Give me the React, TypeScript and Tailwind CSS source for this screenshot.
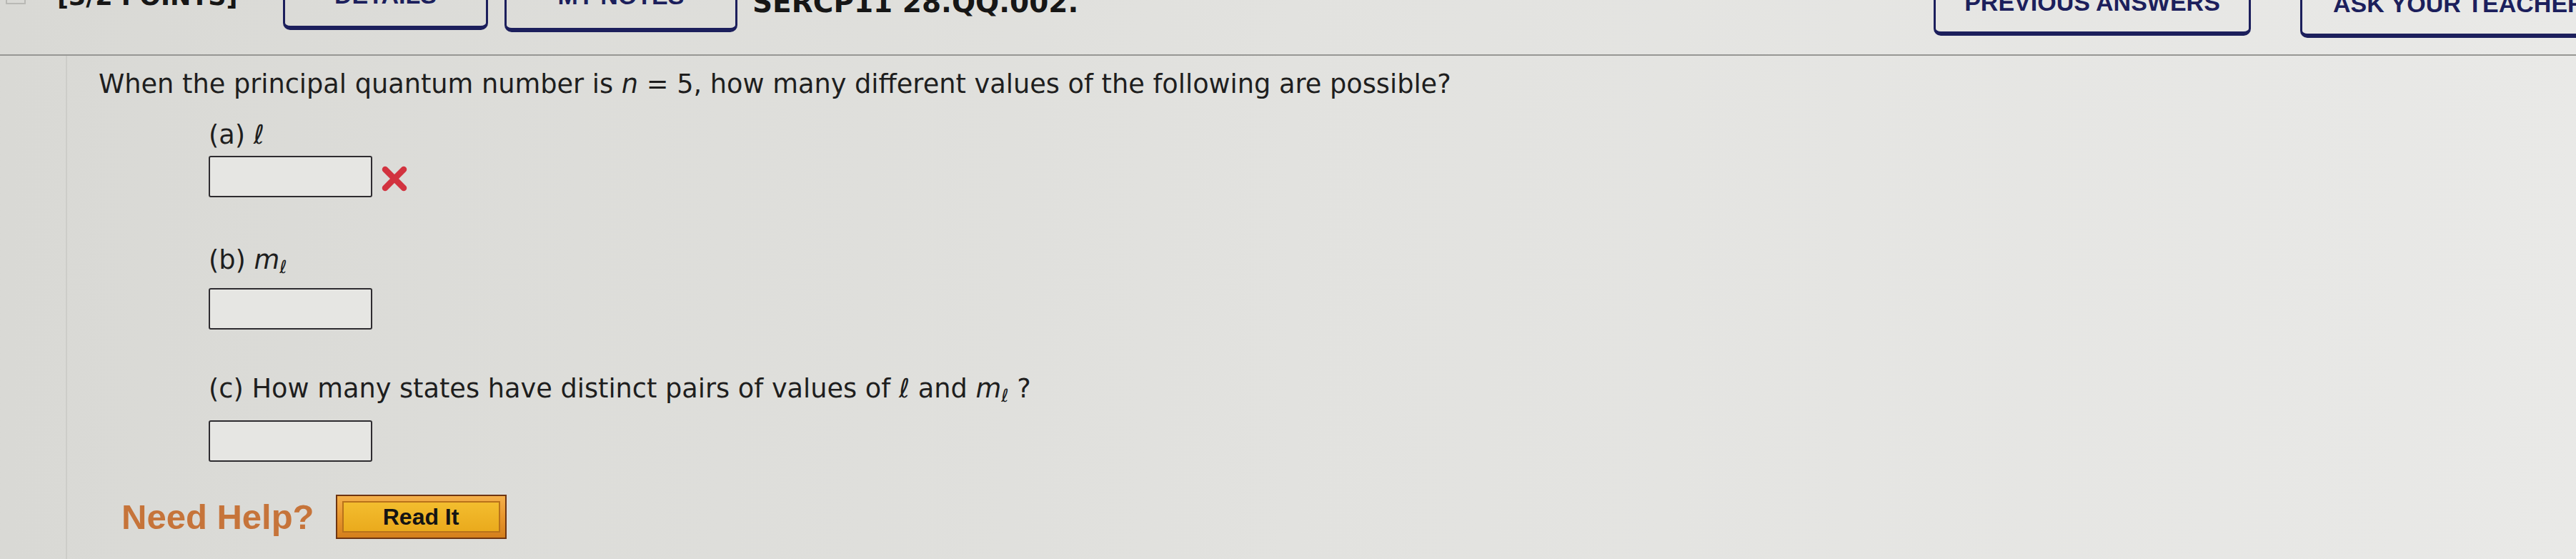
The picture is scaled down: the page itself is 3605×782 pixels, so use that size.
import React from "react";

const sans = { fontFamily: '"DejaVu Sans", Verdana, sans-serif' };

function TopButton({ label, width, height, ml, textTop, align = "center", pl = 0 }: { label: string; width: number; height: number; ml: number; textTop: number; align?: "center" | "left"; pl?: number }) {
  return (
    <div
      className={`flex shrink-0 overflow-hidden rounded-b-[10px] border-x-[3px] border-b-[6px] border-[#1c1f5c] ${align === "center" ? "justify-center" : "justify-start"}`}
      style={{ width, height, marginLeft: ml, paddingLeft: pl }}
    >
      <span
        className="whitespace-nowrap text-[34px] font-bold leading-none text-[#1c1f5c]"
        style={{ fontFamily: '"Liberation Sans", Arial, sans-serif', marginTop: textTop }}
      >
        {label}
      </span>
    </div>
  );
}

function AnswerBox() {
  return <div className="h-[58px] w-[229px] rounded-[3px] border-[2.5px] border-[#2e2c30] bg-[#e6e6e3]" />;
}

function RedX() {
  return (
    <svg width="38" height="40" viewBox="0 0 38 40" className="ml-[12px] mt-[12px]">
      <line x1="6" y1="7" x2="32" y2="33" stroke="#d2333f" strokeWidth="8.5" strokeLinecap="round" />
      <line x1="32" y1="7" x2="6" y2="33" stroke="#d2333f" strokeWidth="8.5" strokeLinecap="round" />
    </svg>
  );
}

const Ell = () => <span>ℓ</span>;
const ML = () => (
  <span>
    <span className="italic">m</span>
    <span className="align-[-0.22em] text-[25px]">ℓ</span>
  </span>
);

export default function App() {
  return (
    <div
      className="relative h-[782px] w-[3605px] overflow-hidden bg-gradient-to-r from-[#d9d9d5] via-[#e2e2df] to-[#e9e9e7] text-[#1e1e1e]"
      style={sans}
    >
      {/* top strip */}
      <div className="flex h-[78px] items-start border-b-2 border-[#979794]">
        <div className="ml-[8px] mt-[-20px] h-[26px] w-[28px] shrink-0 border-2 border-[#b9b9b5]" />
        <span className="ml-[44px] mt-[-22px] w-[253px] shrink-0 whitespace-nowrap text-[35px] font-bold leading-none text-[#161616]">
          [3/2 POINTS]
        </span>
        <TopButton label="DETAILS" width={287} height={42} ml={63} textTop={-24} />
        <TopButton label="MY NOTES" width={326} height={45} ml={23} textTop={-23} />
        <span className="ml-[21px] mt-[-16px] w-[464px] shrink-0 whitespace-nowrap text-[39px] font-bold leading-none text-[#161616]">
          SERCP11 28.QQ.002.
        </span>
        <TopButton label="PREVIOUS ANSWERS" width={444} height={50} ml={1189} textTop={-14} />
        <TopButton label="ASK YOUR TEACHER" width={430} height={53} ml={69} textTop={-12} align="left" pl={43} />
      </div>

      {/* content */}
      <div className="ml-[92px] flex h-[704px] flex-col border-l-2 border-[#cdcdc9] pl-[44px]">
        <p className="mt-[18px] whitespace-nowrap text-[36.7px] leading-[44px]">
          When the principal quantum number is <span className="italic">n</span> = 5, how many different values of the following are possible?
        </p>

        <div className="pl-[154px]">
          <p className="mt-[27px] text-[36.7px] leading-[44px]">
            (a) <Ell />
          </p>
          <div className="mt-[7px] flex items-start">
            <AnswerBox />
            <RedX />
          </div>

          <p className="mt-[66px] text-[36.7px] leading-[44px]">
            (b) <ML />
          </p>
          <div className="mt-[7px]">
            <AnswerBox />
          </div>

          <p className="mt-[61px] whitespace-nowrap text-[36.7px] leading-[44px]">
            (c) How many states have distinct pairs of values of <Ell /> and <ML /> ?
          </p>
          <div className="mt-[13px]">
            <AnswerBox />
          </div>
        </div>

        <div className="mt-[46px] flex items-center pl-[32px]">
          <span
            className="whitespace-nowrap text-[49px] font-bold leading-none text-[#c6743a]"
            style={{ fontFamily: '"Liberation Sans", Arial, sans-serif' }}
          >
            Need Help?
          </span>
          <div className="ml-[30px] h-[62px] w-[239px] border-2 border-[#6e3512] bg-gradient-to-b from-[#f4b04a] via-[#e8962c] to-[#d47f1c] p-[7px]">
            <div className="flex h-full w-full items-center justify-center border-2 border-[#b9721a] bg-gradient-to-b from-[#f3bd2e] to-[#eaaa1c]">
              <span
                className="text-[32px] font-bold leading-none text-[#141414]"
                style={{ fontFamily: '"Liberation Sans", Arial, sans-serif' }}
              >
                Read It
              </span>
            </div>
          </div>
        </div>
      </div>
    </div>
  );
}
